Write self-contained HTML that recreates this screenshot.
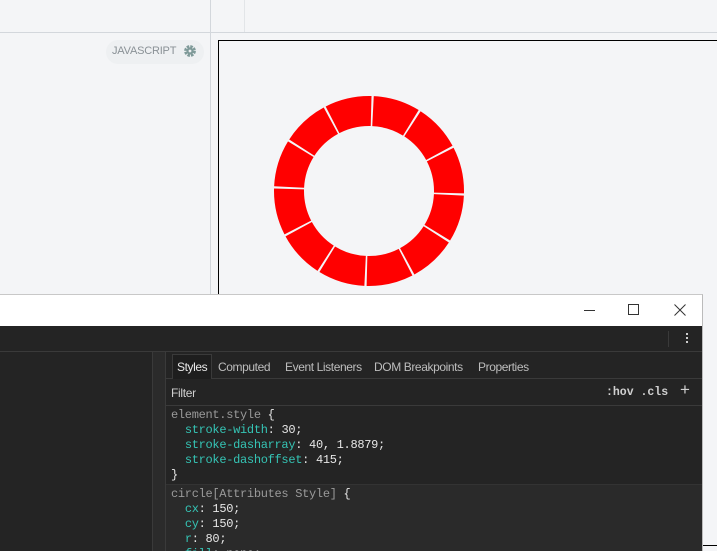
<!DOCTYPE html>
<html><head><meta charset="utf-8"><style>
*{margin:0;padding:0;box-sizing:border-box}
html,body{width:717px;height:551px;overflow:hidden}
body{background:#f4f5f7;font-family:"Liberation Sans",sans-serif;position:relative}
.abs{position:absolute}
.mono{font-family:"Liberation Mono",monospace;font-size:12px;line-height:15px;white-space:pre;letter-spacing:-0.3px}
.p{color:#35c4b5}.v{color:#e6e6e6}.s{color:#9a9a9a}
.tab{position:absolute;top:65px;font-size:12px;color:#bdbdbd;letter-spacing:-0.4px;white-space:nowrap}
</style></head><body>
<div class="abs" style="left:0;top:32px;width:717px;height:1px;background:#d3d7dc"></div>
<div class="abs" style="left:210px;top:0;width:1px;height:300px;background:#d3d7dc"></div>
<div class="abs" style="left:244px;top:0;width:1px;height:32px;background:#e2e5e8"></div>
<div class="abs" style="left:106px;top:40px;width:98px;height:24px;border-radius:12px;background:#eef0f2"></div>
<div class="abs" style="left:112px;top:45px;font-size:11px;color:#8a9196;letter-spacing:-0.2px">JAVASCRIPT</div>
<svg class="abs" style="left:184px;top:45px" width="12" height="12" viewBox="0 0 12 12"><circle cx="6" cy="6" r="4.3" fill="none" stroke="#7f9a99" stroke-width="3.2" stroke-dasharray="2.4 1"/><circle cx="6" cy="6" r="3.6" fill="#7f9a99"/><circle cx="6" cy="6" r="1.4" fill="#eef0f2"/></svg>
<div class="abs" style="left:218px;top:40px;width:520px;height:506px;border:1px solid #000"></div>
<svg class="abs" style="left:219px;top:41px" width="498" height="260"><circle cx="150" cy="150" r="80" fill="none" stroke="#f00" stroke-width="30" stroke-dasharray="40, 1.8879" stroke-dashoffset="415"/></svg>
<div class="abs" style="left:0;top:294px;width:703px;height:257px;background:#242424;border-top:1px solid #c8c8c8;border-right:1px solid #bbb;overflow:hidden">
 <div class="abs" style="left:0;top:0;width:702px;height:31px;background:#fff"></div>
 <div class="abs" style="left:584px;top:15px;width:11px;height:1px;background:#333"></div>
 <div class="abs" style="left:628px;top:9px;width:11px;height:11px;border:1px solid #333"></div>
 <svg class="abs" style="left:674px;top:9px" width="12" height="12"><path d="M0.5 0.5L11.5 11.5M11.5 0.5L0.5 11.5" stroke="#333" stroke-width="1"/></svg>
 <div class="abs" style="left:0;top:31px;width:702px;height:26px;background:#242424;border-bottom:1px solid #3a3a3a"></div>
 <div class="abs" style="left:668px;top:36px;width:1px;height:16px;background:#3a3a3a"></div>
 <div class="abs" style="left:686px;top:38px;width:2px;height:2px;background:#ccc;box-shadow:0 4px 0 #ccc,0 8px 0 #ccc"></div>
 <div class="abs" style="left:152px;top:57px;width:14px;height:200px;background:#2b2b2b;border-left:1px solid #3a3a3a;border-right:1px solid #3a3a3a"></div>
 <div class="abs" style="left:166px;top:57px;width:536px;height:27px;border-bottom:1px solid #3a3a3a"></div>
 <div class="abs" style="left:172px;top:59px;width:40px;height:25px;background:#1e1e1e;border:1px solid #3a3a3a;border-bottom:none"></div>
 <div class="tab" style="left:177px;color:#e8e8e8">Styles</div>
 <div class="tab" style="left:218px">Computed</div>
 <div class="tab" style="left:285px">Event Listeners</div>
 <div class="tab" style="left:374px">DOM Breakpoints</div>
 <div class="tab" style="left:478px">Properties</div>
 <div class="abs" style="left:166px;top:84px;width:536px;height:27px;border-bottom:1px solid #3a3a3a"></div>
 <div class="abs" style="left:171px;top:91px;font-size:12px;color:#d0d0d0;letter-spacing:-0.3px">Filter</div>
 <div class="abs" style="left:606px;top:91px;font-size:11.5px;color:#d0d0d0;font-weight:bold;font-family:'Liberation Mono',monospace">:hov .cls</div>
 <div class="abs" style="left:680px;top:85px;font-size:17px;color:#d0d0d0">+</div>
 <div class="abs" style="left:166px;top:111px;width:536px;height:78px;background:#242424"></div>
 <div class="abs mono" style="left:171px;top:113px"><span class="s">element.style</span> <span class="v">{</span>
  <span class="p">stroke-width</span><span class="v">: 30;</span>
  <span class="p">stroke-dasharray</span><span class="v">: 40, 1.8879;</span>
  <span class="p">stroke-dashoffset</span><span class="v">: 415;</span>
<span class="v">}</span></div>
 <div class="abs" style="left:166px;top:189px;width:536px;height:68px;background:#2a2a2a;border-top:1px solid #333"></div>
 <div class="abs mono" style="left:171px;top:192px"><span class="s">circle[Attributes Style]</span> <span class="v">{</span>
  <span class="p">cx</span><span class="v">: 150;</span>
  <span class="p">cy</span><span class="v">: 150;</span>
  <span class="p">r</span><span class="v">: 80;</span>
  <span class="p">fill</span><span class="v">: none;</span></div>
</div>
</body></html>
